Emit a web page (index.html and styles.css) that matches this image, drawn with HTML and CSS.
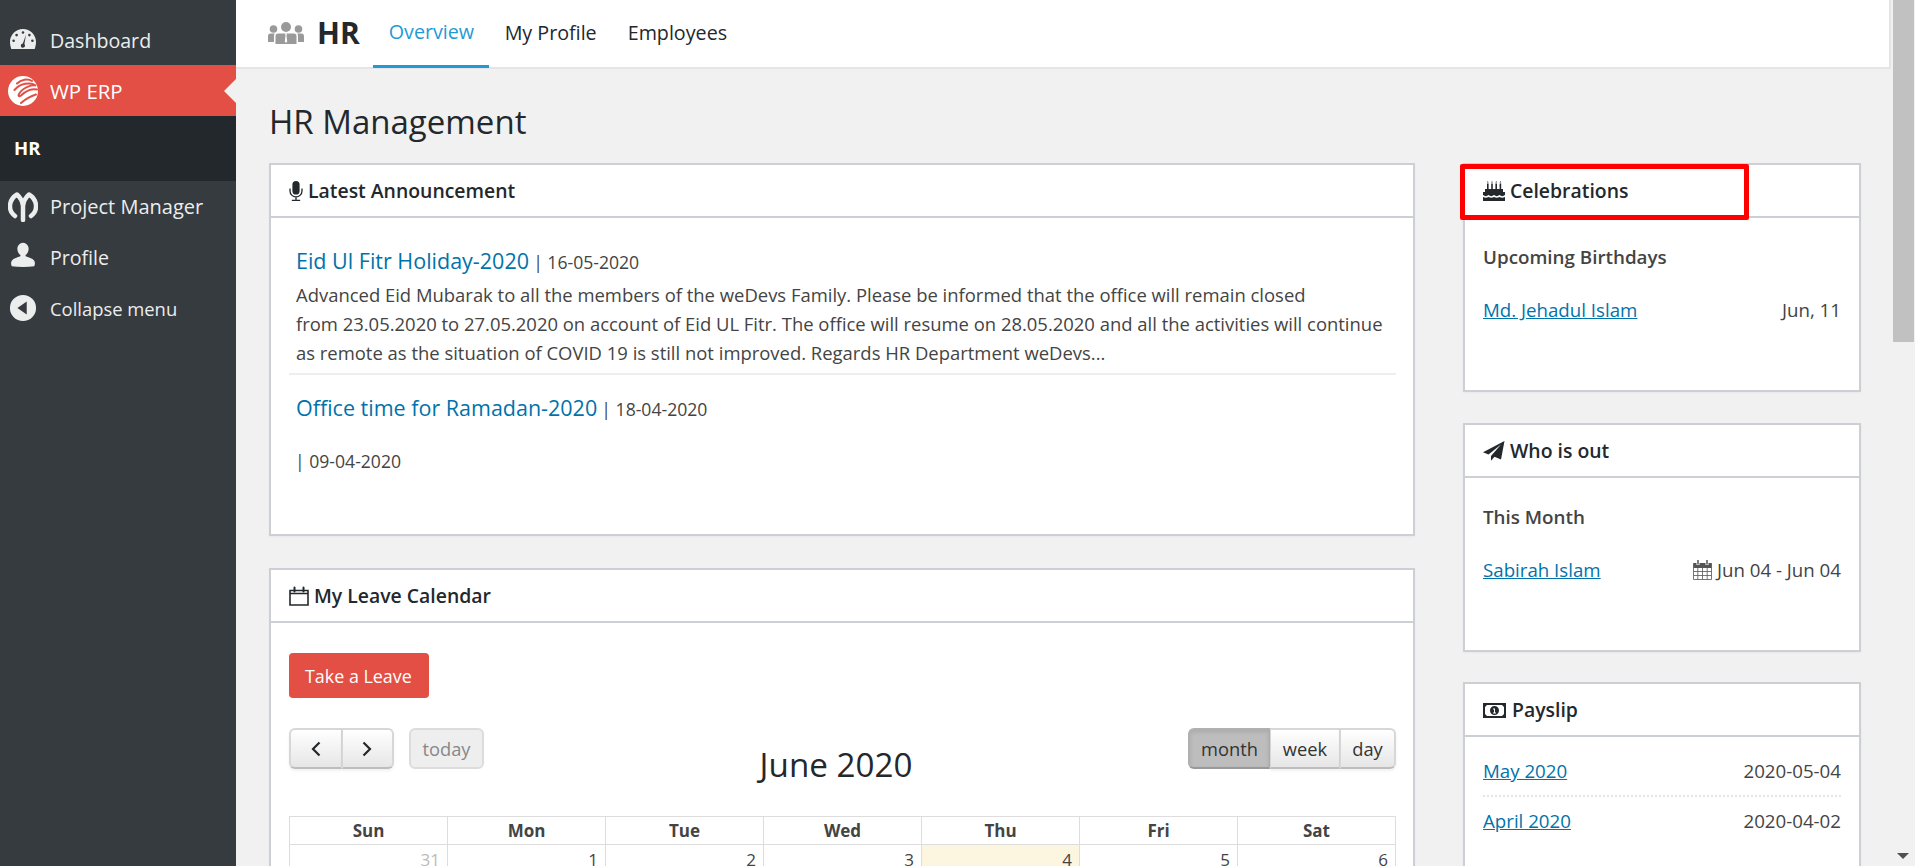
FILE: index.html
```html
<!DOCTYPE html>
<html lang="en">
<head>
<meta charset="utf-8">
<title>HR Management</title>
<link rel="stylesheet" href="styles.css">
</head>
<body>
<div class="page">
  <nav class="side">
    <a class="side-item item-dash">
      <svg class="side-ico" viewBox="0 0 26 20"><path fill="#eceded" fill-rule="evenodd" d="M13 0C5.800 0 0 5.800 0 13c0 2.600.7 5 1.300 7h23.400c.6-2 1.300-4.400 1.300-7C26 5.800 20.200 0 13 0zM13 2.200a1.300 1.300 0 1 1 0 2.600 1.300 1.300 0 0 1 0-2.600zM6.600 4.800a1.300 1.300 0 1 1 0 2.600 1.300 1.300 0 0 1 0-2.600zM19.400 4.800a1.300 1.300 0 1 1 0 2.600 1.300 1.300 0 0 1 0-2.600zM3.600 10.400a1.300 1.300 0 1 1 0 2.600 1.300 1.300 0 0 1 0-2.600zM22.400 10.400a1.300 1.300 0 1 1 0 2.600 1.300 1.300 0 0 1 0-2.600zM16 5.800l-1.600 9.200c.5.600.8 1.300.6 2.100-.3 1.200-1.400 1.900-2.600 1.600-1.100-.3-1.800-1.400-1.500-2.500.2-.9 1-1.600 1.900-1.700z"/></svg>
      <span>Dashboard</span>
    </a>
    <a class="side-item item-active">
      <svg class="side-ico" viewBox="0 0 30 30"><circle cx="15" cy="15" r="15" fill="#fff"/><path fill="none" stroke="#e34f45" stroke-width="2" stroke-linecap="round" d="M9 7.500C13 3.500 20 2.500 24 5M6.500 14C12 7.500 22 5.500 28 9.500C24 8.800 15 11 11 18C10 20 11 21 13 19.500C17 15.500 24 12 29 13.500M13 27C17 23.500 23 20 28 18.500"/></svg>
      <span>WP ERP</span>
    </a>
    <div class="side-sub"><a class="side-sub-link">HR</a></div>
    <a class="side-item item-pm">
      <svg class="side-ico" viewBox="0 0 30 30"><path fill="none" stroke="#eceded" stroke-width="4.500" stroke-linecap="round" stroke-linejoin="round" d="M7 24C0 19 0 8 9 2.500C12.500 5.500 14.500 9.500 15 14V28M23 24C30 19 30 8 21 2.500C17.500 5.500 15.500 9.500 15 14"/></svg>
      <span>Project Manager</span>
    </a>
    <a class="side-item item-prof">
      <svg class="side-ico" viewBox="0 0 30 30"><path fill="#eceded" d="M15 1a6.500 6.500 0 0 1 6.500 7c0 3-1.500 5.500-3.500 7v1.500c3 1 8 2.500 10 5 1 1.500 1 4.500 0 6.500-8 1-18 1-26 0-1-2-1-5 0-6.500 2-2.500 7-4 10-5V15c-2-1.500-3.500-4-3.500-7A6.500 6.500 0 0 1 15 1z"/></svg>
      <span>Profile</span>
    </a>
    <a class="side-item item-coll">
      <svg class="side-ico" viewBox="0 0 30 30"><path fill="#eceded" fill-rule="evenodd" d="M15 1a14 14 0 1 1 0 28 14 14 0 0 1 0-28zM19 8L9 15l10 7z"/></svg>
      <span>Collapse menu</span>
    </a>
  </nav>

  <div class="main">
    <header class="topbar">
      <svg class="hr-ico" viewBox="0 0 36 22"><g fill="#9a9a9a"><circle cx="18" cy="5" r="5"/><path d="M10 11.500h16c1.500 0 2.500 1 2.500 2.500v8h-21v-8c0-1.500 1-2.500 2.500-2.500z"/><circle cx="5.500" cy="7" r="3.800"/><path d="M0 14c0-1.500 1-2.500 2.500-2.500H7c-.8.800-1 1.500-1 2.500v6H0z"/><circle cx="30.500" cy="7" r="3.800"/><path d="M36 14c0-1.500-1-2.500-2.500-2.500H29c.8.800 1 1.500 1 2.500v6h6z"/></g><path fill="#fff" d="M17 11.500h2l-.5 2 .7 6-1.200 1.500-1.200-1.500.7-6z"/></svg>
      <span class="hr-title">HR</span>
      <a class="tab tab-on">Overview</a>
      <a class="tab">My Profile</a>
      <a class="tab">Employees</a>
    </header>

    <div class="content">
      <h1 class="page-title">HR Management</h1>
      <div class="cols">
        <div class="col-left">
          <section class="card card-ann">
            <h2 class="card-head">
              <svg class="head-ico ico-mic" viewBox="0 0 14 20"><path fill="#23282d" d="M7 0a3.600 3.600 0 0 1 3.600 3.600v6.300a3.600 3.600 0 0 1-7.200 0V3.600A3.600 3.600 0 0 1 7 0z"/><path fill="none" stroke="#23282d" stroke-width="1.300" d="M1 7.500v2.400a6 6 0 0 0 12 0V7.500M7 15.900v3.300M2.800 19.300h8.400"/></svg>
              Latest Announcement
            </h2>
            <ul class="ann-list">
              <li class="ann ann-first">
                <div class="ann-title"><a class="ann-link">Eid Ul Fitr Holiday-2020</a> <span class="ann-date">| 16-05-2020</span></div>
                <p class="ann-text">Advanced Eid Mubarak to all the members of the weDevs Family. Please be informed that the office will remain closed from&nbsp;23.05.2020&nbsp;to&nbsp;27.05.2020 on account of Eid UL Fitr. The office will resume on 28.05.2020 and all the activities will continue as remote as the situation of COVID 19 is still not improved. Regards HR Department weDevs...</p>
              </li>
              <li class="ann ann-second">
                <div class="ann-title"><a class="ann-link">Office time for Ramadan-2020</a> <span class="ann-date">| 18-04-2020</span></div>
              </li>
              <li class="ann ann-third">
                <div class="ann-title"><span class="ann-date">| 09-04-2020</span></div>
              </li>
            </ul>
          </section>

          <section class="card card-cal">
            <h2 class="card-head">
              <svg class="head-ico ico-cal" viewBox="0 0 20 20"><path fill="none" stroke="#23282d" stroke-width="1.600" d="M1 4.500h18V19H1zM1 7.500h18"/><path fill="none" stroke="#23282d" stroke-width="2" stroke-linecap="round" d="M5.500 1.500v4M14.500 1.500v4"/></svg>
              My Leave Calendar
            </h2>
            <div class="cal-body">
              <a class="btn-leave">Take a Leave</a>
              <div class="cal-toolbar">
                <div class="tool-left">
                  <div class="btn-group">
                    <button class="fc-btn fc-nav"><svg class="chev" viewBox="0 0 12 16"><path d="M9.500 1.500L3 8l6.500 6.500" fill="none" stroke="#23282d" stroke-width="2.200"/></svg></button>
                    <button class="fc-btn fc-nav"><svg class="chev" viewBox="0 0 12 16"><path d="M2.500 1.500L9 8l-6.500 6.500" fill="none" stroke="#23282d" stroke-width="2.200"/></svg></button>
                  </div>
                  <button class="fc-btn fc-today">today</button>
                </div>
                <h2 class="cal-title">June 2020</h2>
                <div class="btn-group">
                  <button class="fc-btn fc-active">month</button>
                  <button class="fc-btn fc-week">week</button>
                  <button class="fc-btn fc-day">day</button>
                </div>
              </div>
              <table class="cal-table">
                <thead>
                  <tr><th>Sun</th><th>Mon</th><th>Tue</th><th>Wed</th><th>Thu</th><th>Fri</th><th>Sat</th></tr>
                </thead>
                <tbody>
                  <tr><td class="muted">31</td><td>1</td><td>2</td><td>3</td><td class="today">4</td><td>5</td><td>6</td></tr>
                </tbody>
              </table>
            </div>
          </section>
        </div>

        <div class="col-right">
          <section class="card card-side">
            <h2 class="card-head">
              <svg class="head-ico ico-cake" viewBox="0 0 22 20"><path fill="#23282d" d="M4 2.500h1.600v6H4zM8.200 2.500h1.600v6H8.200zM12.400 2.500H14v6h-1.600zM16.600 2.500h1.600v6h-1.600zM4.800 0l.8 1.500H4zM9 0l.8 1.500H8.200zM13.200 0l.8 1.500h-1.600zM17.400 0l.8 1.500h-1.600z"/><path fill="#23282d" d="M2 8h18v3H2zM0 11h22v3c-2 1.500-3.500 1.500-5.500 0-2 1.500-3.500 1.500-5.500 0-2 1.500-3.500 1.500-5.500 0-2 1.500-3.500 1.500-5.500 0zM0 16c2 1 3.500 1 5.500 0 2 1 3.500 1 5.500 0 2 1 3.500 1 5.500 0 2 1 3.500 1 5.500 0v4H0z"/></svg>
              Celebrations
            </h2>
            <div class="side-body">
              <h4 class="side-h">Upcoming Birthdays</h4>
              <div class="side-row"><a class="u-link">Md. Jehadul Islam</a><span>Jun, 11</span></div>
            </div>
            <div class="callout"></div>
          </section>

          <section class="card card-side">
            <h2 class="card-head">
              <svg class="head-ico ico-cake" viewBox="0 0 22 20"><path fill="#23282d" d="M21.500 0L18 18.500l-6.500-2.700-3.500 4v-4.800L18 3.500 5.500 13.500 0 11.200z"/></svg>
              Who is out
            </h2>
            <div class="side-body">
              <h4 class="side-h">This Month</h4>
              <div class="side-row"><a class="u-link">Sabirah Islam</a><span class="range"><svg class="ico-range" viewBox="0 0 19 20"><path fill="none" stroke="#555" stroke-width=".8" d="M.5 3.500h18v16H.5zM.5 11.500h18M.5 15.500h18M4.800 8v11.500M9.500 8v11.500M14.200 8v11.500"/><path fill="#555" d="M.5 3h18v5H.5z"/><path fill="#fff" d="M3.500 2h3v3h-3zM12.500 2h3v3h-3z"/><path fill="none" stroke="#555" stroke-width="1.500" d="M5 0v4.500M14 0v4.500"/></svg>Jun 04 - Jun 04</span></div>
            </div>
          </section>

          <section class="card card-pay">
            <h2 class="card-head">
              <svg class="head-ico ico-money" viewBox="0 0 23 15"><path fill="#23282d" fill-rule="evenodd" d="M0 0h23v15H0zM4 2L2 4v7l2 2h15l2-2V4l-2-2z"/><path fill="#23282d" fill-rule="evenodd" d="M11.500 3a4.500 4.500 0 1 1 0 9 4.500 4.500 0 0 1 0-9zM10 5.500v1h1v3h-1v1h3v-1h-1v-4z"/></svg>
              Payslip
            </h2>
            <div class="pay-body">
              <div class="pay-row"><a class="u-link">May 2020</a><span>2020-05-04</span></div>
              <div class="pay-row"><a class="u-link">April 2020</a><span>2020-04-02</span></div>
            </div>
          </section>
        </div>
      </div>
    </div>
  </div>

  <div class="scrollbar">
    <div class="thumb"></div>
    <div class="arrow"></div>
  </div>
</div>
</body>
</html>
```
FILE: styles.css
```css
* { box-sizing: border-box; }
html, body { margin: 0; padding: 0; height: 100%; overflow: hidden; }
body {
  font-family: "Open Sans", "Noto Sans", sans-serif;
  font-size: 16px;
  color: #444;
  background: #f1f1f1;
}
a { text-decoration: none; }
h1, h2, h4, p, ul { margin: 0; padding: 0; }
ul { list-style: none; }

.page { display: flex; width: 1915px; height: 866px; overflow: hidden; }

/* sidebar */
.side { width: 236px; flex: none; background: #363b3f; color: #eceded; }
.side-item {
  position: relative;
  display: flex;
  align-items: center;
  height: 51px;
  padding-left: 50px;
  font-size: 19.600px;
  color: #eceded;
}
.side-ico { position: absolute; display: block; }
.item-dash { margin-top: 15px; height: 50px; }
.item-dash .side-ico { left: 10px; top: 14px; width: 26px; height: 20px; }
.item-active { background: #e34f45; color: #fff; font-size: 20.400px; }
.item-active .side-ico { left: 8px; top: 11px; width: 30px; height: 30px; }
.item-active::after {
  content: "";
  position: absolute;
  right: 0;
  top: 14px;
  border: 12px solid transparent;
  border-left: 0;
  border-right-color: #f1f1f1;
}
.side-sub { height: 65px; background: #23282d; padding: 20px 0 0 14px; }
.side-sub-link { font-size: 18.500px; font-weight: 700; line-height: 24px; color: #fff; }
.item-pm { font-size: 20px; }
.item-pm .side-ico { left: 8px; top: 11px; width: 30px; height: 30px; }
.item-prof .side-ico { left: 10px; top: 10px; width: 26px; height: 26px; }
.item-coll { font-size: 18.400px; }
.item-coll .side-ico { left: 9px; top: 11px; width: 28px; height: 28px; }

/* main */
.main { width: 1657px; flex: none; }
.topbar {
  display: flex;
  align-items: stretch;
  height: 69px;
  margin-right: 2px;
  padding-left: 32px;
  background: #fff;
  border-right: 2px solid #e5e5e5;
  border-bottom: 2px solid #e5e5e5;
}
.hr-ico { width: 36px; height: 22px; align-self: center; margin-top: -1px; }
.hr-title {
  align-self: center;
  margin: -2px 13px 0 13px;
  font-size: 30px;
  font-weight: 700;
  color: #23282d;
}
.tab {
  display: flex;
  align-items: center;
  height: 68px;
  padding: 0 15.500px 4px;
  font-size: 19.700px;
  color: #23282d;
}
.tab-on { color: #1f9ad6; border-bottom: 3px solid #1f9ad6; padding: 1px 15px 3px 16px; }

.content { padding: 0 32px 0 33px; }
.page-title {
  margin: 31px 0 19px;
  font-size: 33px;
  font-weight: 400;
  line-height: 44px;
  color: #23282d;
}
.cols { display: flex; gap: 48px; align-items: flex-start; }
.col-left { width: 1146px; flex: none; display: flex; flex-direction: column; gap: 32px; }
.col-right { width: 398px; flex: none; display: flex; flex-direction: column; gap: 30.500px; }

/* cards */
.card {
  position: relative;
  background: #fff;
  border: 2px solid #ccd0d4;
  box-shadow: 0 1px 2px rgba(0,0,0,.04);
}
.card-head {
  display: flex;
  align-items: center;
  gap: 5px;
  height: 53px;
  padding: 1px 18px 0;
  border-bottom: 2px solid #ccd0d4;
  font-size: 19.400px;
  font-weight: 600;
  line-height: 24px;
  color: #23282d;
}
.head-ico { flex: none; display: block; }
.ico-mic { width: 14px; height: 20px; }
.ico-cal { width: 20px; height: 20px; }
.ico-cake { width: 22px; height: 20px; }
.ico-money { width: 23px; height: 15px; margin-right: 1px; }

/* announcements */
.card-ann { height: 373px; }
.ann-list { padding: 28px 17px 0 18px; }
.ann { padding: 0 7px; }
.ann-first { padding-bottom: 6.500px; border-bottom: 2px solid #eee; }
.ann-second { padding-top: 17.500px; }
.ann-third { padding: 20px 7px 0 6px; }
.ann-title { line-height: 30px; margin-bottom: 1.500px; }
.ann-link { font-size: 21.500px; color: #0073aa; }
.ann-date { font-size: 17.600px; color: #444; }
.ann-text { font-size: 18.450px; line-height: 29px; color: #444; }

/* calendar */
.card-cal { height: 500px; }
.cal-body { padding: 30px 17px 0 18px; }
.btn-leave {
  display: inline-block;
  height: 45px;
  padding: 0 17px 0 16px;
  background: #e34f45;
  border-radius: 4px;
  font-size: 17.900px;
  line-height: 46px;
  color: #fff;
}
.cal-toolbar {
  display: flex;
  justify-content: space-between;
  align-items: flex-start;
  margin-top: 30px;
  height: 88px;
}
.tool-left { display: flex; gap: 15px; }
.btn-group { display: flex; }
.fc-btn {
  height: 41px;
  padding: 0;
  font-family: inherit;
  font-size: 18.300px;
  color: #333;
  background: linear-gradient(#ffffff, #e6e6e6);
  border: 2px solid #d7d7d7;
  border-bottom-color: #bdbdbd;
  border-left-width: 1px;
  border-right-width: 1px;
  box-shadow: 0 2px 3px rgba(0,0,0,.06);
}
.btn-group .fc-btn:first-child { border-left-width: 2px; border-radius: 6px 0 0 6px; }
.btn-group .fc-btn:last-child { border-right-width: 2px; border-radius: 0 6px 6px 0; }
.fc-nav { width: 52.500px; display: flex; align-items: center; justify-content: center; }
.chev { width: 12px; height: 16px; display: block; }
.fc-today { width: 75px; border-width: 2px; border-radius: 6px; color: #888; background: #eee; box-shadow: none; border-color: #dcdcdc; }
.fc-active {
  width: 82px;
  color: #333;
  background: #bdbdbd;
  border-color: #b0b0b0;
  border-bottom-color: #999;
  box-shadow: inset 0 2px 4px rgba(0,0,0,.1);
}
.fc-week { width: 70px; }
.fc-day { width: 56px; }
.cal-title { margin-top: 14px; font-size: 33.200px; font-weight: 400; line-height: 46px; color: #23282d; }
.cal-table { width: 1107px; table-layout: fixed; border-collapse: collapse; }
.cal-table th, .cal-table td { border: 1px solid #ddd; }
.cal-table th { height: 28px; padding: 0; font-size: 17px; font-weight: 700; color: #444; }
.cal-table td { height: 100px; padding: 4px 7px 0 0; font-size: 17px; line-height: 22px; text-align: right; vertical-align: top; color: #444; }
.cal-table .muted { color: #bbb; }
.cal-table .today { background: #fcf5e0; }

/* side cards */
.card-side { height: 229px; }
.side-body { padding: 27px 18px 0; }
.side-h { font-size: 18.800px; font-weight: 600; line-height: 24px; color: #444; }
.side-row, .pay-row { display: flex; justify-content: space-between; align-items: center; font-size: 18.700px; color: #444; }
.side-row { margin-top: 29px; line-height: 24px; }
.u-link { color: #0073aa; text-decoration: underline; }
.range { display: flex; align-items: center; gap: 5px; }
.ico-range { width: 19px; height: 20px; display: block; }
.card-pay { height: 300px; }
.pay-body { padding: 9px 18px 0; }
.pay-row { height: 49px; }
.pay-row + .pay-row { border-top: 2px dotted #e4e4e4; }
.callout {
  position: absolute;
  left: -5px;
  top: -1px;
  width: 289px;
  height: 56px;
  border: 5px solid #f00;
  border-radius: 2px;
}

/* scrollbar */
.scrollbar { position: relative; width: 22px; flex: none; }
.thumb { width: 21px; height: 342px; background: #c1c1c1; }
.arrow {
  position: absolute;
  left: 4px;
  bottom: 7px;
  border: 6px solid transparent;
  border-bottom: 0;
  border-top-color: #505050;
}
```
